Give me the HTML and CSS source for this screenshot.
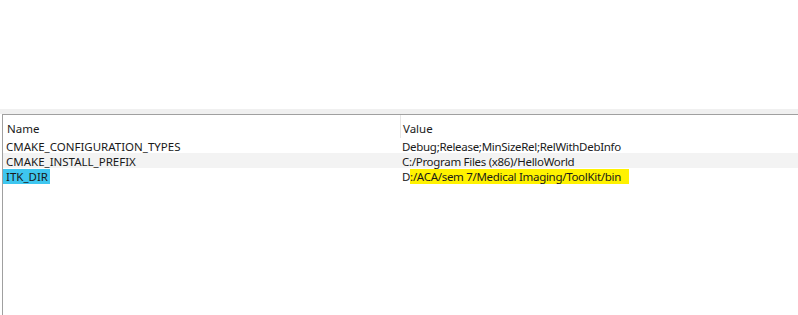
FILE: index.html
```html
<!DOCTYPE html>
<html>
<head>
<meta charset="utf-8">
<link rel="stylesheet" href="styles.css">
</head>
<body>
<div class="top"></div>
<div class="band"></div>
<div class="panel">
  <div class="header">
    <div class="col name">Name</div>
    <div class="col value sep">Value</div>
  </div>
  <div class="row">
    <div class="col name">CMAKE_CONFIGURATION_TYPES</div>
    <div class="col value">Debug;Release;MinSizeRel;RelWithDebInfo</div>
  </div>
  <div class="row alt">
    <div class="col name">CMAKE_INSTALL_PREFIX</div>
    <div class="col value">C:/Program Files (x86)/HelloWorld</div>
  </div>
  <div class="row">
    <div class="col name"><span class="hl-cyan">ITK_DIR</span></div>
    <div class="col value">D<span class="hl-yellow">:/ACA/sem 7/Medical Imaging/ToolKit/bin</span></div>
  </div>
</div>
</body>
</html>
```
FILE: styles.css
```css
html, body {
  margin: 0;
  padding: 0;
  background: #ffffff;
  width: 798px;
  height: 315px;
  overflow: hidden;
}
body {
  font-family: "Noto Sans", "Open Sans", sans-serif;
  font-size: 11.5px;
  color: #1a1a1a;
}
.top {
  height: 109px;
}
.band {
  height: 5px;
  background: #f0f0f0;
}
.panel {
  margin-left: 2px;
  border-top: 1px solid #a0a0a0;
  border-left: 1px solid #a0a0a0;
  height: 200px;
}
.header {
  display: flex;
  height: 23px;
  align-items: center;
  padding-top: 3px;
  box-sizing: border-box;
}
.header .sep {
  border-left: 1px solid #e5e5e5;
  height: 23px;
  display: flex;
  align-items: center;
  padding-left: 3px;
  padding-top: 3px;
  margin-top: -3px;
  box-sizing: border-box;
}
.row {
  display: flex;
  height: 15px;
  line-height: 15px;
  align-items: center;
  padding-top: 1px;
  box-sizing: border-box;
}
.row.alt {
  background: #f3f3f3;
}
.col.name {
  width: 397px;
  padding-left: 3px;
  box-sizing: border-box;
}
.header .col.name {
  padding-left: 4px;
}
.col.value {
  padding-left: 2px;
  white-space: nowrap;
  letter-spacing: -0.3px;
}
.header .col.value {
  letter-spacing: 0;
}
.hl-cyan {
  background: #3ec6ef;
  padding: 0 2px 0 3px;
  margin-left: -3px;
}
.hl-yellow {
  background: #fff200;
  padding: 0 8px 0 0;
}
```
